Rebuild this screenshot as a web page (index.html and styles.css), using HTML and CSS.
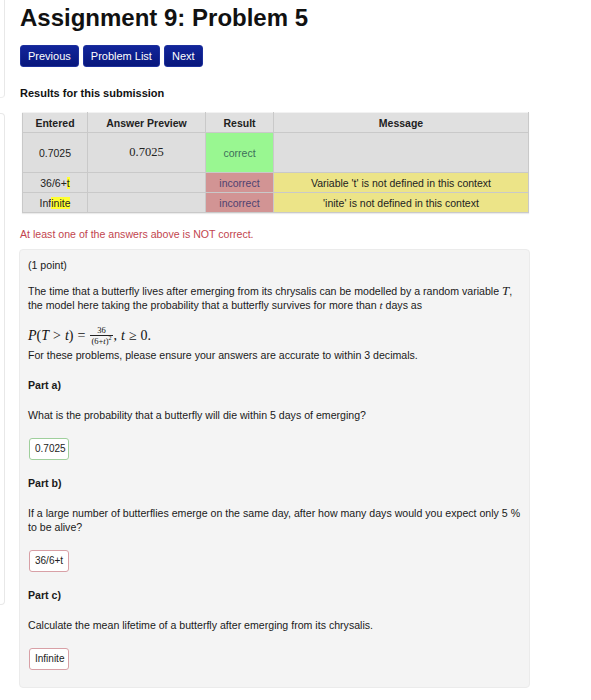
FILE: index.html
```html
<!DOCTYPE html>
<html>
<head>
<meta charset="utf-8">
<link rel="stylesheet" href="styles.css">
</head>
<body>
<div class="page">
  <div class="rail">
    <div class="rail-top"></div>
    <div class="rail-main"></div>
  </div>
  <div class="main">
    <h1 class="title">Assignment 9: Problem 5</h1>
    <div class="nav">
      <span class="btn">Previous</span>
      <span class="btn">Problem List</span>
      <span class="btn">Next</span>
    </div>
    <div class="results-title">Results for this submission</div>
    <table class="results">
      <tr class="head">
        <th class="c-entered">Entered</th>
        <th class="c-preview">Answer Preview</th>
        <th class="c-result">Result</th>
        <th class="c-msg">Message</th>
      </tr>
      <tr class="tall">
        <td>0.7025</td>
        <td class="preview">0.7025</td>
        <td class="ok">correct</td>
        <td></td>
      </tr>
      <tr>
        <td>36/6+<span class="hl">t</span></td>
        <td></td>
        <td class="bad">incorrect</td>
        <td class="warn">Variable 't' is not defined in this context</td>
      </tr>
      <tr>
        <td>Inf<span class="hl">inite</span></td>
        <td></td>
        <td class="bad">incorrect</td>
        <td class="warn">'inite' is not defined in this context</td>
      </tr>
    </table>
    <div class="err">At least one of the answers above is NOT correct.</div>
    <div class="problem">
      <p class="pts">(1 point)</p>
      <p class="para">The time that a butterfly lives after emerging from its chrysalis can be modelled by a random variable <span class="mvar big">T</span>, the model here taking the probability that a butterfly survives for more than <span class="mvar">t</span> days as</p>
      <div class="formula"><span class="mi">P</span><span class="mr">(</span><span class="mi">T</span><span class="rel">&gt;</span><span class="mi">t</span><span class="mr">)</span><span class="rel">=</span><span class="frac"><span class="num">36</span><span class="den">(6+<i>t</i>)<sup>2</sup></span></span><span class="mr">,</span><span class="mi sp">t</span><span class="rel">≥</span><span class="mr">0.</span></div>
      <p class="para tight">For these problems, please ensure your answers are accurate to within 3 decimals.</p>
      <p class="part">Part a)</p>
      <p class="para">What is the probability that a butterfly will die within 5 days of emerging?</p>
      <div class="ans good">0.7025</div>
      <p class="part">Part b)</p>
      <p class="para">If a large number of butterflies emerge on the same day, after how many days would you expect only 5&nbsp;% to be alive?</p>
      <div class="ans wrong">36/6+t</div>
      <p class="part">Part c)</p>
      <p class="para">Calculate the mean lifetime of a butterfly after emerging from its chrysalis.</p>
      <div class="ans wrong">Infinite</div>
    </div>
  </div>
</div>
</body>
</html>
```
FILE: styles.css
```css
html, body {
  margin: 0;
  padding: 0;
  background: #ffffff;
}
body {
  font-family: "Liberation Sans", Arial, sans-serif;
  color: #1a1a1a;
  font-size: 10.6px;
}
.page {
  display: flex;
  align-items: flex-start;
}
.rail {
  width: 5px;
  display: flex;
  flex-direction: column;
  gap: 15px;
}
.rail-top {
  height: 97px;
  border-right: 1px solid #e8e8e8;
  border-bottom: 1px solid #ededed;
  border-bottom-right-radius: 4px;
}
.rail-main {
  height: 490px;
  border: 1px solid #e8e8e8;
  border-left: none;
  border-radius: 0 4px 4px 0;
}
.main {
  margin-left: 15px;
  width: 512px;
}
.title {
  margin: 5px 0 0 0;
  font-size: 24px;
  font-weight: bold;
  line-height: 26px;
  color: #111;
}
.nav {
  display: flex;
  gap: 4px;
  margin-top: 14px;
}
.btn {
  display: block;
  height: 20px;
  line-height: 20px;
  padding: 0 7px;
  color: #fff;
  font-size: 11px;
  background: linear-gradient(#12259a, #08177c);
  border: 1px solid #1c2f9c;
  border-radius: 3px;
}
.results-title {
  margin-top: 19px;
  font-weight: bold;
  font-size: 11px;
  line-height: 14px;
  color: #111;
}
.results {
  margin: 12px 0 0 2px;
  width: 507px;
  border-collapse: collapse;
  border: 1px solid #c2c2c2;
  background: #dedede;
  font-size: 10.5px;
  box-shadow: 0 1px 1px rgba(0,0,0,0.08);
}
.results th, .results td {
  height: 19px;
  padding: 0;
  text-align: center;
  border: 1px solid #c9c9c9;
  border-top: 1px solid #f2f2f2;
  color: #222;
}
.results th {
  font-weight: bold;
  background: #e0e0e0;
}
.results .tall td {
  height: 39px;
}
.c-entered { width: 64px; }
.c-preview { width: 117px; }
.c-result { width: 67px; }
.results td.preview {
  font-family: "Liberation Serif", "Times New Roman", serif;
  font-size: 12.5px;
}
.results td.ok {
  background: #99f791;
  color: #3d6e5a;
}
.results td.bad {
  background: #d29494;
  color: #4f4270;
}
.results td.warn {
  background: #ece488;
  color: #222;
}
.hl {
  background: #ffff30;
}
.err {
  margin-top: 15px;
  color: #c2454e;
  line-height: 12px;
}
.problem {
  margin: 9px 0 0 -1px;
  width: 497px;
  padding: 8px 4px 17px 8px;
  background: #f4f4f4;
  border: 1px solid #ebebeb;
  border-radius: 4px;
}
.problem p {
  margin: 0;
  line-height: 14px;
}
.pts {
  margin-bottom: 12px !important;
}
.para {
  margin-bottom: 16px !important;
}
.para.tight {
  margin-top: 0 !important;
}
.part {
  font-weight: bold;
  margin-bottom: 16px !important;
}
.mvar {
  font-family: "Liberation Serif", "Times New Roman", serif;
  font-style: italic;
  font-size: 11px;
  line-height: 1;
}
.mvar.big {
  font-size: 13px;
}
.formula {
  display: flex;
  align-items: center;
  height: 24px;
  margin-top: -4px;
  font-family: "Liberation Serif", "Times New Roman", serif;
  font-size: 14px;
  color: #111;
}
.mi {
  font-style: italic;
}
.mi.sp {
  margin-left: 4px;
}
.rel {
  margin: 0 4px;
}
.frac {
  display: inline-flex;
  flex-direction: column;
  align-items: center;
  font-size: 8.5px;
  line-height: 9px;
  margin: 0 1px 0 1px;
}
.num {
  border-bottom: 1px solid #222;
  padding: 0 2px;
  align-self: stretch;
  text-align: center;
}
.den {
  padding: 1px 1px 0;
}
.den sup {
  font-size: 6px;
  line-height: 0;
}
.ans {
  box-sizing: border-box;
  width: 40px;
  height: 22px;
  line-height: 20px;
  margin: 0 0 16px 1px;
  padding: 0 0 0 5px;
  background: #fff;
  border-radius: 3px;
  font-size: 10px;
  color: #222;
  white-space: nowrap;
  overflow: hidden;
}
.ans.good {
  border: 1px solid #9fcf9c;
}
.ans.wrong {
  border: 1px solid #d8a0a6;
}
.problem .ans:last-child {
  margin-bottom: 0;
}
```
